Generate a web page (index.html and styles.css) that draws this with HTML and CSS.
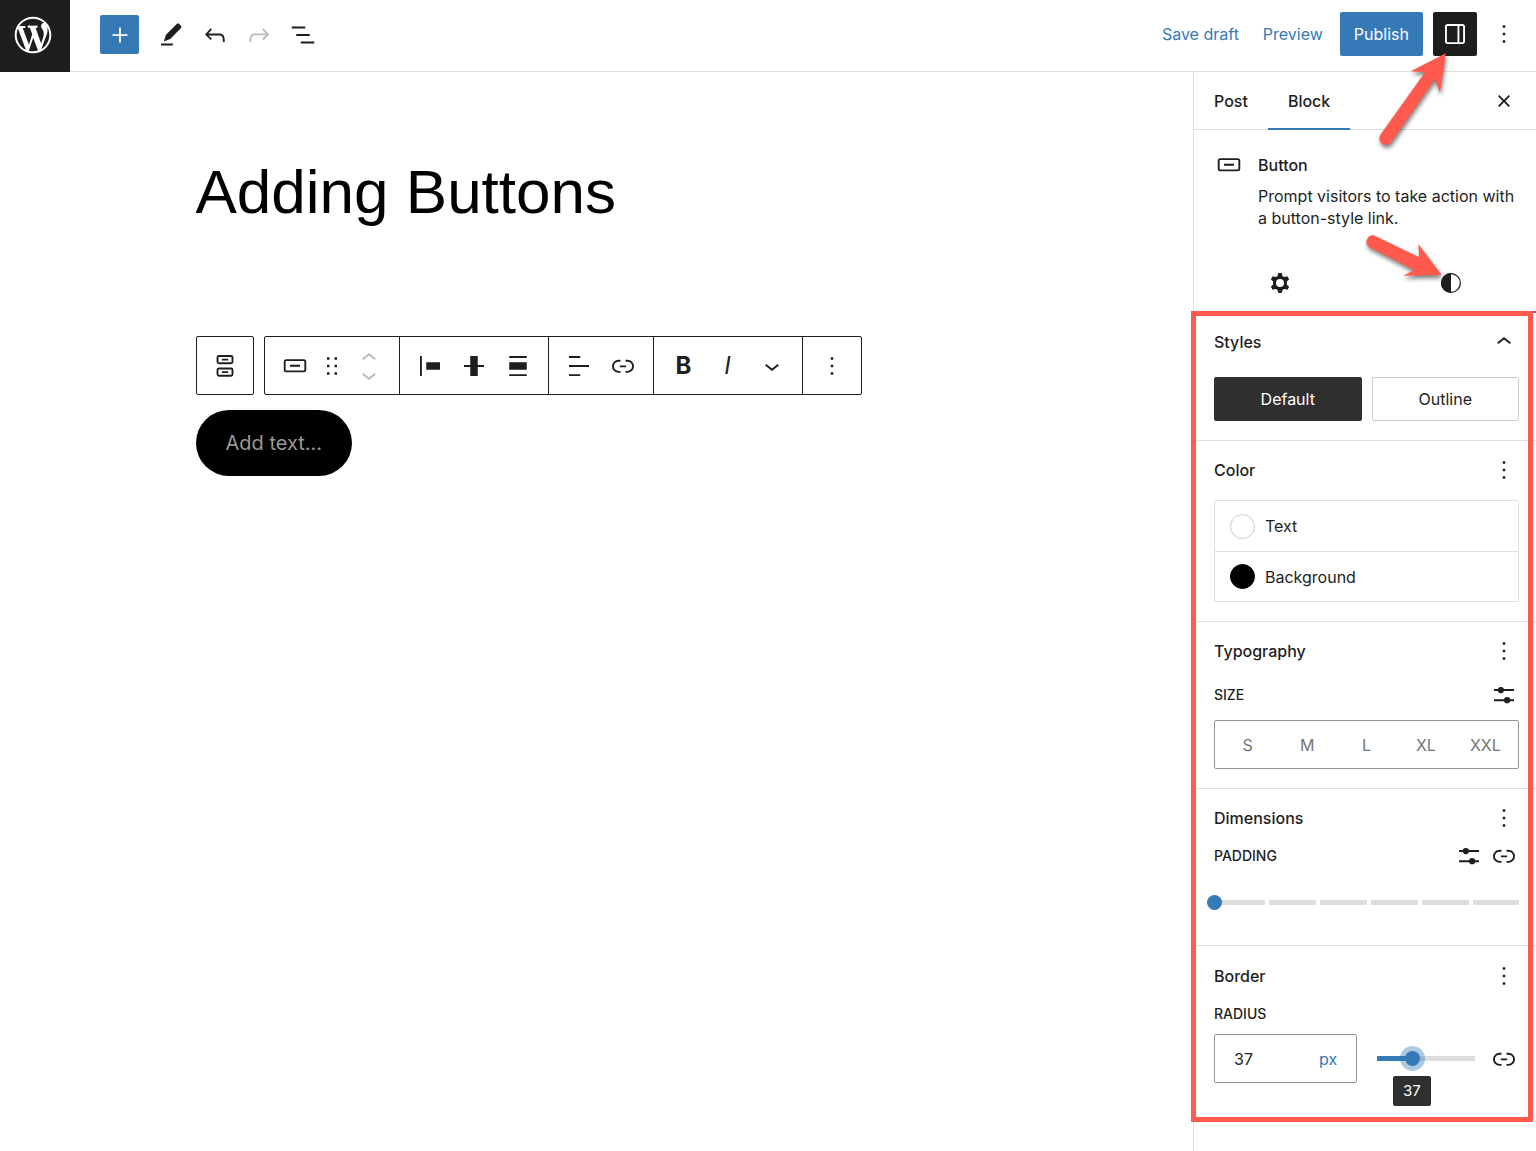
FILE: index.html
```
<!DOCTYPE html>
<html lang="en">
<head>
    <meta charset="UTF-8">
    <meta name="viewport" content="width=device-width, initial-scale=1.0">
    <title>Edit Post</title>
    <link rel="stylesheet" href="styles.css">
</head>
<body>

    <!-- Shared icons -->
    <svg class="sprite" aria-hidden="true">
        <symbol id="more" viewBox="0 0 24 24"><path d="M13 19h-2v-2h2v2zm0-6h-2v-2h2v2zm0-6h-2V5h2v2z"/></symbol>
        <symbol id="link" viewBox="0 0 24 24"><path d="M10 17.4H8.4A5.2 5.2 0 1 1 8.4 7H10v1.5H8.4a3.7 3.7 0 0 0 0 7.4H10v1.5ZM14 7h1.6a5.2 5.2 0 0 1 0 10.4H14v-1.5h1.6a3.7 3.7 0 0 0 0-7.4H14V7Zm-4.5 6h5v-1.5h-5V13Z"/></symbol>
        <symbol id="button-icon" viewBox="0 0 24 24"><path fill-rule="evenodd" d="M8 12.5h8V11H8v1.5ZM19 6.5H5a2 2 0 0 0-2 2V15a2 2 0 0 0 2 2h14a2 2 0 0 0 2-2V8.5a2 2 0 0 0-2-2ZM5 8h14a.5.5 0 0 1 .5.5V15a.5.5 0 0 1-.5.5H5a.5.5 0 0 1-.5-.5V8.5A.5.5 0 0 1 5 8Z"/></symbol>
        <symbol id="sliders" viewBox="0 0 24 24"><path d="M4 7.2h16v1.5H4zM4 15.4h16v1.5H4z"/><circle cx="9.5" cy="8" r="2.5"/><circle cx="14.5" cy="16.1" r="2.5"/></symbol>
        <symbol id="chevron-up" viewBox="0 0 24 24"><path d="M6.5 12.4L12 8l5.5 4.4-.9 1.2L12 10l-4.5 3.6-1-1.2z"/></symbol>
        <symbol id="chevron-down" viewBox="0 0 24 24"><path d="M17.5 11.6L12 16l-5.5-4.4.9-1.2L12 14l4.5-3.6 1 1.2z"/></symbol>
    </svg>

    <header class="header">
        <a class="wp-logo" href="#" aria-label="View posts">
            <svg viewBox="-2 -2 24 24"><path d="M20 10c0-5.51-4.49-10-10-10C4.48 0 0 4.49 0 10c0 5.52 4.48 10 10 10 5.51 0 10-4.48 10-10zM7.78 15.37L4.37 6.22c.55-.02 1.17-.08 1.17-.08.5-.06.44-1.13-.06-1.11 0 0-1.45.11-2.37.11-.18 0-.37 0-.58-.01C4.12 2.69 6.87 1.11 10 1.11c2.33 0 4.45.87 6.05 2.34-.68-.11-1.65.39-1.65 1.58 0 .74.45 1.36.9 2.1.35.61.55 1.36.55 2.46 0 1.49-1.4 5-1.4 5l-3.03-8.37c.54-.02.82-.17.82-.17.5-.05.44-1.25-.06-1.22 0 0-1.44.12-2.38.12-.87 0-2.33-.12-2.33-.12-.5-.03-.56 1.2-.06 1.22l.92.08 1.26 3.41zM17.41 10c.24-.64.74-1.87.43-4.25.7 1.29 1.05 2.71 1.05 4.25 0 3.29-1.73 6.24-4.4 7.78.97-2.59 1.94-5.2 2.92-7.78zM6.1 18.09C3.12 16.65 1.11 13.53 1.11 10c0-1.3.23-2.48.72-3.59C3.25 10.3 4.67 14.2 6.1 18.09zm4.03-6.63l2.58 6.98c-.86.29-1.76.45-2.71.45-.79 0-1.57-.11-2.29-.33.81-2.38 1.62-4.74 2.42-7.1z"/></svg>
        </a>
        <div class="header-tools">
            <button class="inserter" aria-label="Toggle block inserter"><svg class="icon" viewBox="0 0 24 24"><path d="M11.3 12.7V18h1.4v-5.3H18v-1.4h-5.3V6h-1.4v5.3H6v1.4h5.3z"/></svg></button>
            <button class="icon-btn" aria-label="Tools"><svg class="icon" viewBox="0 0 24 24"><path d="m20.2 4.8-2.2-2.2-1.2.4L8 11.8l-1.8 5.4 5.2-2L20.2 6.2zM4 18.8h9.5v1.5H4z"/></svg></button>
            <button class="icon-btn" aria-label="Undo"><svg class="icon" viewBox="0 0 24 24"><path d="M18.3 11.7c-.6-.6-1.4-.9-2.3-.9H6.7l2.9-3.3-1.1-1-4.5 5L8.5 16l1-1-2.7-2.7H16c.5 0 .9.2 1.3.5 1 1 1 3.4 1 4.5v.3h1.5v-.2c0-1.5 0-4.3-1.5-5.7z"/></svg></button>
            <button class="icon-btn faded" aria-label="Redo"><svg class="icon" viewBox="0 0 24 24"><path d="M15.6 6.5l-1.1 1 2.9 3.3H8c-.9 0-1.7.3-2.3.9-1.4 1.5-1.4 4.2-1.4 5.6v.2h1.5v-.3c0-1.1 0-3.5 1-4.5.3-.3.7-.5 1.3-.5h9.2L14.5 15l1.1 1.1 4.6-4.6-4.6-5z"/></svg></button>
            <button class="icon-btn" aria-label="List view"><svg class="icon" viewBox="0 0 24 24"><path d="M13.8 5.2H3v1.5h10.8V5.2zm-3.6 12v1.5H21v-1.5H10.2zm7.2-6H6.6v1.5h10.8v-1.5z"/></svg></button>
        </div>
        <div class="header-actions">
            <button class="text-btn">Save draft</button>
            <button class="text-btn">Preview</button>
            <button class="publish">Publish</button>
            <button class="icon-btn settings-toggle" aria-label="Settings"><svg class="icon" viewBox="0 0 24 24"><path fill-rule="evenodd" d="M18 4H6c-1.1 0-2 .9-2 2v12c0 1.1.9 2 2 2h12c1.1 0 2-.9 2-2V6c0-1.1-.9-2-2-2zm-4 14.5H6c-.3 0-.5-.2-.5-.5V6c0-.3.2-.5.5-.5h8v13zm4.5-.5c0 .3-.2.5-.5.5h-2.5v-13H18c.3 0 .5.2.5.5v12z"/></svg></button>
            <button class="icon-btn options" aria-label="Options"><svg class="icon"><use href="#more"/></svg></button>
        </div>
    </header>

    <div class="layout">
        <main class="editor">
            <div class="content">
                <h1 class="post-title">Adding Buttons</h1>

                <div class="block-toolbar">
                    <div class="toolbar-box">
                        <div class="group parent">
                            <button class="icon-btn" aria-label="Select Buttons"><svg class="icon" viewBox="0 0 24 24"><g fill="none" stroke="currentColor" stroke-width="1.5"><rect x="6" y="4" width="12" height="5.8" rx="1.2"/><rect x="6" y="14" width="12" height="5.8" rx="1.2"/><path d="M9.5 6.9h5M9.5 16.9h5"/></g></svg></button>
                        </div>
                    </div>
                    <div class="toolbar-box">
                        <div class="group">
                            <button class="icon-btn" aria-label="Button"><svg class="icon"><use href="#button-icon"/></svg></button>
                            <button class="drag" aria-label="Drag"><svg class="icon" viewBox="0 0 24 24"><path d="M8 7h2V5H8v2zm0 6h2v-2H8v2zm0 6h2v-2H8v2zm6-14v2h2V5h-2zm0 8h2v-2h-2v2zm0 6h2v-2h-2v2z"/></svg></button>
                            <div class="mover">
                                <button aria-label="Move up"><svg class="icon"><use href="#chevron-up"/></svg></button>
                                <button aria-label="Move down"><svg class="icon"><use href="#chevron-down"/></svg></button>
                            </div>
                        </div>
                        <div class="group">
                            <button class="icon-btn" aria-label="Justify items left"><svg class="icon" viewBox="0 0 24 24"><path d="M9 9v6h11V9H9zM4 20h1.5V4H4v16z"/></svg></button>
                            <button class="icon-btn" aria-label="Vertical align"><svg class="icon" viewBox="0 0 24 24"><path d="M20 11.2h-5V4H9v7.2H4v1.5h5V20h6v-7.3h5z"/></svg></button>
                            <button class="icon-btn" aria-label="Align"><svg class="icon" viewBox="0 0 24 24"><path d="M19 5.5H5V4h14v1.5ZM19 20H5v-1.5h14V20ZM5 9h14v6H5V9Z"/></svg></button>
                        </div>
                        <div class="group">
                            <button class="icon-btn" aria-label="Align text"><svg class="icon" viewBox="0 0 24 24"><path d="M13 5.5H4V4h9v1.5zm7 7.2H4v-1.5h16v1.5zm-7 7.3H4v-1.5h9V20z"/></svg></button>
                            <button class="icon-btn" aria-label="Link"><svg class="icon"><use href="#link"/></svg></button>
                        </div>
                        <div class="group">
                            <button class="icon-btn bold" aria-label="Bold">B</button>
                            <button class="icon-btn italic" aria-label="Italic">I</button>
                            <button class="icon-btn" aria-label="More"><svg class="icon"><use href="#chevron-down"/></svg></button>
                        </div>
                        <div class="group">
                            <button class="icon-btn" aria-label="Options"><svg class="icon"><use href="#more"/></svg></button>
                        </div>
                    </div>
                </div>

                <button class="block-button">Add text...</button>
            </div>
        </main>

        <aside class="sidebar">
            <div class="sidebar-tabs">
                <button class="tab">Post</button>
                <button class="tab active">Block</button>
                <button class="close" aria-label="Close settings"><svg class="icon" viewBox="0 0 24 24"><path d="M12 13.06l3.712 3.713 1.061-1.06L13.061 12l3.712-3.712-1.06-1.06L12 10.938 8.288 7.227l-1.061 1.06L10.939 12l-3.712 3.712 1.06 1.061L12 13.061z"/></svg></button>
            </div>

            <div class="block-card">
                <svg class="icon"><use href="#button-icon"/></svg>
                <div>
                    <h2>Button</h2>
                    <p>Prompt visitors to take action with a button-style link.</p>
                </div>
            </div>

            <div class="inspector-tabs">
                <button aria-label="Settings"><svg class="icon" viewBox="0 0 24 24"><path fill-rule="evenodd" d="M10.7 4h2.6l.8 2.5 1.2.7 2.6-.6 1.4 2.3-1.8 1.9v2.4l1.8 1.9-1.4 2.3-2.6-.6-1.2.7-.8 2.5h-2.6l-.8-2.5-1.2-.7-2.6.6-1.4-2.3 1.8-1.9v-2.4L4.7 8.9l1.4-2.3 2.6.6 1.2-.7zM12 8.8a3.2 3.2 0 1 0 0 6.4 3.2 3.2 0 0 0 0-6.4z"/></svg></button>
                <button class="active" aria-label="Styles"><svg class="icon" viewBox="0 0 24 24"><circle cx="12" cy="12" r="7.5" fill="none" stroke="currentColor"/><path d="M12 4a8 8 0 0 0 0 16z"/></svg></button>
            </div>

            <div class="panels">
                <section class="panel">
                    <div class="panel-head">
                        <h2>Styles</h2>
                        <button aria-label="Collapse"><svg class="icon"><use href="#chevron-up"/></svg></button>
                    </div>
                    <div class="variations">
                        <button class="active">Default</button>
                        <button>Outline</button>
                    </div>
                </section>

                <section class="panel">
                    <div class="panel-head">
                        <h2>Color</h2>
                        <button aria-label="Color options"><svg class="icon"><use href="#more"/></svg></button>
                    </div>
                    <div class="color-list">
                        <button><span class="swatch"></span>Text</button>
                        <button><span class="swatch black"></span>Background</button>
                    </div>
                </section>

                <section class="panel">
                    <div class="panel-head">
                        <h2>Typography</h2>
                        <button aria-label="Typography options"><svg class="icon"><use href="#more"/></svg></button>
                    </div>
                    <div class="control-head size-head">
                        <h3>Size</h3>
                        <button aria-label="Set custom size"><svg class="icon"><use href="#sliders"/></svg></button>
                    </div>
                    <div class="sizes">
                        <button>S</button>
                        <button>M</button>
                        <button>L</button>
                        <button>XL</button>
                        <button>XXL</button>
                    </div>
                </section>

                <section class="panel">
                    <div class="panel-head">
                        <h2>Dimensions</h2>
                        <button aria-label="Dimensions options"><svg class="icon"><use href="#more"/></svg></button>
                    </div>
                    <div class="control-head">
                        <label for="padding">Padding</label>
                        <button aria-label="Set custom padding"><svg class="icon"><use href="#sliders"/></svg></button>
                        <button aria-label="Unlink sides"><svg class="icon"><use href="#link"/></svg></button>
                    </div>
                    <input class="range stepped" id="padding" type="range" min="0" max="6" value="0">
                </section>

                <section class="panel">
                    <div class="panel-head">
                        <h2>Border</h2>
                        <button aria-label="Border options"><svg class="icon"><use href="#more"/></svg></button>
                    </div>
                    <div class="control-head">
                        <label for="radius">Radius</label>
                    </div>
                    <div class="radius-row">
                        <div class="unit-input">
                            <input id="radius" type="text" value="37">
                            <select aria-label="Unit"><option>px</option><option>%</option><option>em</option></select>
                        </div>
                        <div class="radius-slider">
                            <input class="range filled" type="range" min="0" max="100" value="37" aria-label="Border radius">
                            <span class="tooltip">37</span>
                        </div>
                        <button aria-label="Unlink radii"><svg class="icon"><use href="#link"/></svg></button>
                    </div>
                </section>
            </div>
        </aside>
    </div>

    <!-- Arrows pointing at the settings toggle and the styles tab -->
    <svg class="arrows" viewBox="0 0 180 250" aria-hidden="true">
        <path d="M89.7 13.3 54.7 31.3 69 32.3 24.5 94.5a6.5 6.5 0 0 0 11 7.5L79 39.3 84 52.7z"/>
        <path d="M85.7 235 62.3 204 63.3 217.3 18.2 195.5a6.5 6.5 0 0 0-5.2 11.5L58 230 47.3 235.7z"/>
    </svg>

</body>
</html>
```

FILE: styles.css
```
* {
    box-sizing: border-box;
}

body {
    margin: 0;
    min-height: 100vh;
    position: relative;
    display: flex;
    flex-direction: column;
    background-color: #fff;
    color: #1e1e1e;
    font-family: Inter, "Liberation Sans", sans-serif;
    font-size: 16px;
    line-height: 22px;
}

h1, h2, h3, p {
    margin: 0;
}

button, input, select {
    font: inherit;
    color: inherit;
    margin: 0;
    padding: 0;
    border: none;
    background: none;
}

button {
    cursor: pointer;
}

.sprite {
    position: absolute;
    width: 0;
    height: 0;
}

.icon {
    display: block;
    width: 30px;
    height: 30px;
    fill: currentColor;
    flex-shrink: 0;
}

.icon-btn {
    width: 44px;
    height: 44px;
    display: flex;
    align-items: center;
    justify-content: center;
    border-radius: 2px;
}

/* Header */
.header {
    display: flex;
    align-items: center;
    height: 72px;
    border-bottom: 1px solid #e0e0e0;
}

.wp-logo {
    width: 70px;
    height: 72px;
    display: flex;
    align-items: center;
    padding: 0 0 2px 11px;
    background-color: #1e1e1e;
    color: #fff;
}

.wp-logo svg {
    width: 44px;
    height: 44px;
    fill: currentColor;
}

.header-tools {
    display: flex;
    align-items: center;
    padding-left: 30px;
    padding-bottom: 2px;
}

.inserter {
    width: 39px;
    height: 39px;
    margin-right: 10px;
    display: flex;
    align-items: center;
    justify-content: center;
    background-color: #357ab7;
    color: #fff;
    border-radius: 2px;
}

.faded {
    color: #bbb;
}

.header-actions {
    display: flex;
    align-items: center;
    gap: 10px;
    margin-left: auto;
    padding-right: 10px;
    padding-bottom: 3px;
}

.text-btn {
    height: 44px;
    padding: 0 7px;
    color: #357ab7;
}

.publish {
    height: 44px;
    padding: 0 14px;
    background-color: #357ab7;
    color: #fff;
    border-radius: 2px;
}

.settings-toggle {
    background-color: #1e1e1e;
    color: #fff;
}

.options {
    margin-left: -5px;
}

/* Editor */
.layout {
    flex: 1;
    display: flex;
}

.editor {
    flex: 1;
    padding: 82px 32px;
}

.content {
    max-width: 802px;
    margin: 0 auto;
}

.post-title {
    color: #000;
    font-family: "Liberation Sans", Arial, sans-serif;
    font-size: 62px;
    line-height: 76px;
    font-weight: 400;
}

.block-toolbar {
    display: flex;
    gap: 10px;
    margin-top: 106px;
}

.toolbar-box {
    display: flex;
    border: 1px solid #1e1e1e;
    border-radius: 2px;
}

.group {
    display: flex;
    align-items: center;
    height: 57px;
    padding: 0 8px;
}

.group + .group {
    border-left: 1px solid #1e1e1e;
}

.group:last-child {
    padding: 0 7px;
}

.group.parent {
    padding: 0 6px;
}

.drag {
    width: 30px;
}

.mover {
    width: 44px;
    color: #bbb;
}

.mover button {
    display: block;
    width: 44px;
    height: 17px;
}

.mover .icon {
    margin: -6px auto;
}

.bold {
    font-size: 24px;
    font-weight: 700;
}

.italic {
    font-size: 24px;
    font-style: italic;
}

.block-button {
    margin-top: 15px;
    padding: 18px 30px;
    background-color: #000;
    color: #999;
    border-radius: 37px;
    font-size: 20px;
    line-height: 30px;
}

/* Sidebar */
.sidebar {
    width: 343px;
    border-left: 1px solid #e0e0e0;
}

.sidebar-tabs {
    display: flex;
    height: 58px;
    border-bottom: 1px solid #e0e0e0;
    font-weight: 500;
}

.tab {
    height: 58px;
    padding: 0 20px;
}

.tab.active {
    box-shadow: inset 0 -2px #357ab7;
}

.close {
    margin-left: auto;
    padding-right: 17px;
}

.block-card {
    display: flex;
    gap: 14px;
    padding: 20px 20px 0;
}

.block-card h2 {
    line-height: 30px;
    margin-bottom: 5px;
}

.inspector-tabs {
    display: flex;
    margin-top: 24px;
}

.inspector-tabs button {
    flex: 1;
    height: 60px;
    display: flex;
    align-items: center;
    justify-content: center;
}

.inspector-tabs .active {
    box-shadow: inset 0 -2px #357ab7;
}

h2 {
    font-size: 16px;
    font-weight: 500;
}

h3, label {
    flex: 1;
    font-size: 14px;
    font-weight: 500;
    text-transform: uppercase;
}

/* Red frame drawn round all the style panels */
.panels {
    position: relative;
}

.panels::after {
    content: "";
    position: absolute;
    inset: -2px 3px 0 -3px;
    border: 5px solid #ff5a4d;
    pointer-events: none;
}

.panel {
    padding: 14px 17px 19px 20px;
    border-bottom: 1px solid #e0e0e0;
}

.panel:last-child {
    padding-top: 15px;
    padding-bottom: 39px;
    border-bottom: none;
}

.panel-head, .control-head {
    display: flex;
    align-items: center;
    justify-content: space-between;
    height: 30px;
}

.control-head {
    gap: 5px;
    margin-top: 8px;
}

.size-head {
    margin-top: 14px;
}

.variations {
    display: flex;
    gap: 10px;
    margin-top: 20px;
}

.variations button {
    flex: 1;
    height: 44px;
    border: 1px solid #ccc;
    border-radius: 2px;
}

.variations .active {
    background-color: #2f2f2f;
    border-color: #2f2f2f;
    color: #fff;
}

.color-list {
    margin-top: 15px;
    border: 1px solid #e0e0e0;
    border-radius: 2px;
}

.color-list button {
    display: flex;
    align-items: center;
    gap: 10px;
    width: 100%;
    height: 50px;
    padding: 0 15px;
}

.color-list button + button {
    border-top: 1px solid #e0e0e0;
}

.swatch {
    width: 25px;
    height: 25px;
    border: 1px solid #ccc;
    border-radius: 50%;
}

.black {
    background-color: #000;
    border-color: #000;
}

.sizes {
    display: flex;
    height: 49px;
    margin-top: 10px;
    padding: 0 3px;
    border: 1px solid #949494;
    border-radius: 2px;
}

.sizes button {
    flex: 1;
    color: #757575;
}

.range {
    appearance: none;
    display: block;
    height: 24px;
}

.range::-webkit-slider-thumb {
    appearance: none;
    width: 15px;
    height: 15px;
    border-radius: 50%;
    background-color: #357ab7;
}

.stepped {
    width: calc(100% + 15px);
    margin: 19px -7px 12px;
    background: repeating-linear-gradient(to right, #fff 0 4px, #ddd 4px 51px) 7px center / calc(100% - 15px) 5px no-repeat;
}

.radius-row {
    display: flex;
    align-items: center;
    margin-top: 5px;
}

.unit-input {
    display: flex;
    align-items: center;
    width: 143px;
    height: 49px;
    padding: 0 13px 0 19px;
    border: 1px solid #949494;
    border-radius: 2px;
}

.unit-input input {
    flex: 1;
    min-width: 0;
}

.unit-input select {
    appearance: none;
    color: #357ab7;
}

.radius-slider {
    position: relative;
    flex: 1;
    margin: 0 7px 0 12px;
}

.filled {
    width: 100%;
    background: linear-gradient(to right, #357ab7 37%, #ddd 37%) center / calc(100% - 15px) 5px no-repeat;
}

.filled::-webkit-slider-thumb {
    box-shadow: 0 0 0 5px rgba(53, 122, 183, 0.4);
}

.tooltip {
    position: absolute;
    top: 29px;
    left: 24px;
    padding: 4px 10px;
    background-color: #2f2f2f;
    color: #fff;
    border-radius: 2px;
    font-size: 15px;
}

/* Arrows */
.arrows {
    position: absolute;
    top: 40px;
    right: 0;
    width: 180px;
    height: 250px;
    overflow: visible;
    fill: #ff5a4d;
    filter: drop-shadow(1px 3px 2px rgba(0, 0, 0, 0.5));
    pointer-events: none;
}
```
